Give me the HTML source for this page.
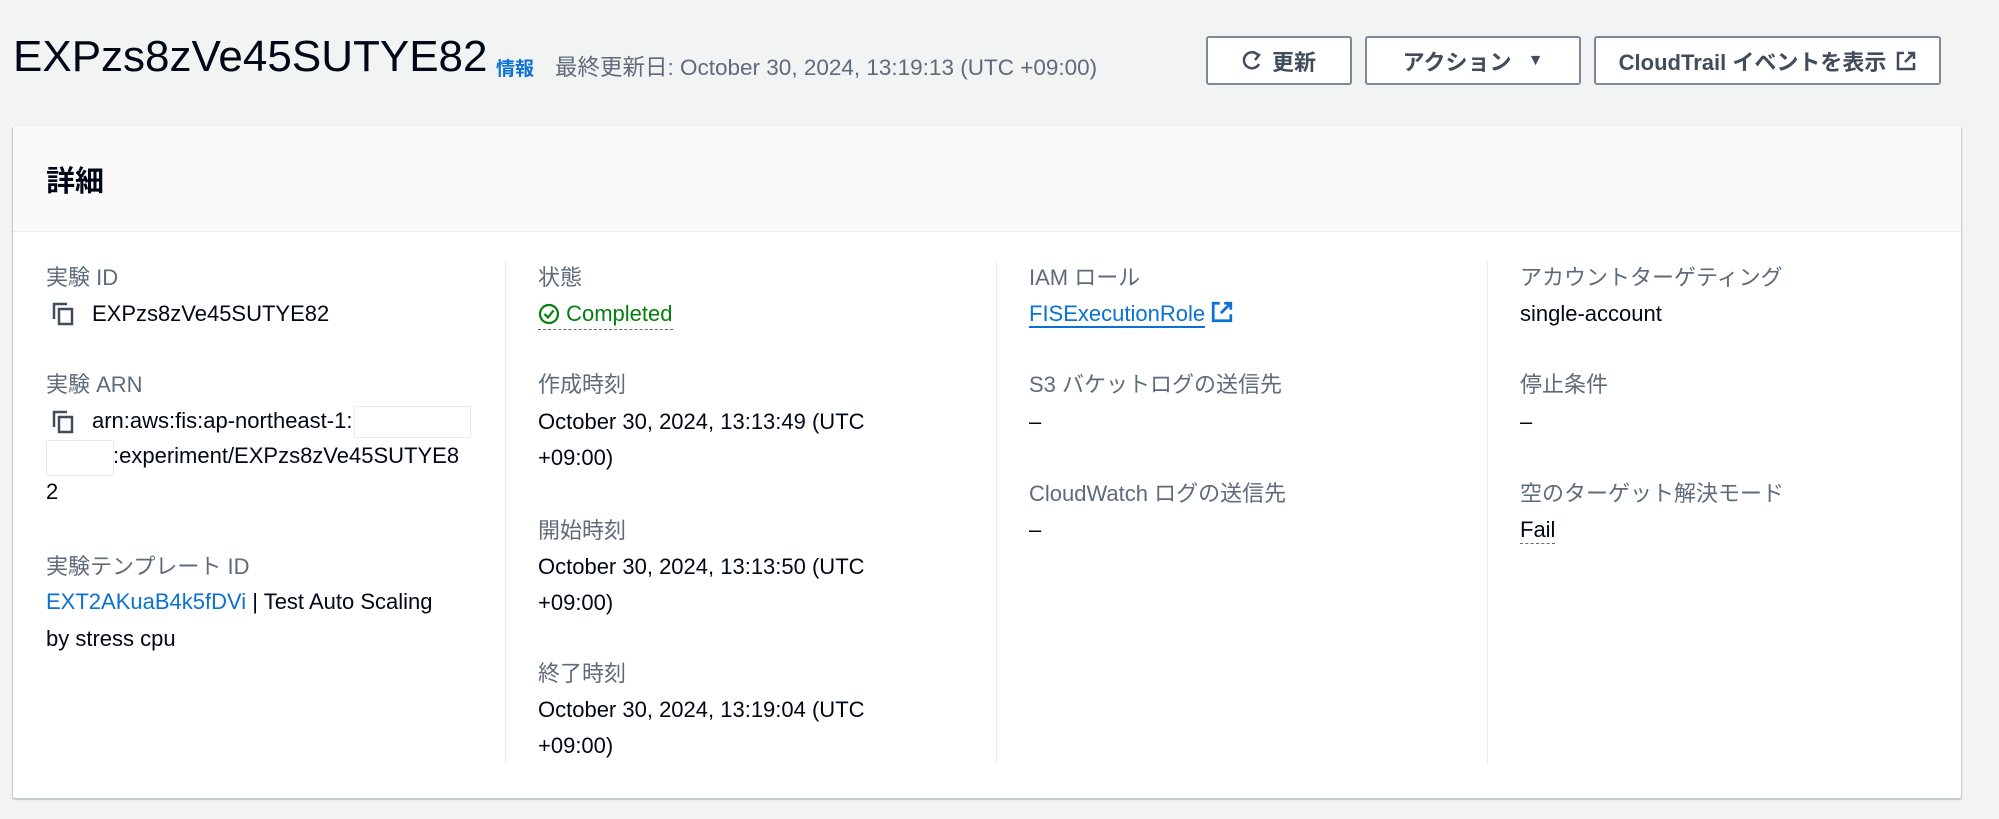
<!DOCTYPE html>
<html><head><meta charset="utf-8"><style>
body{margin:0;width:1999px;height:819px;background:#f2f3f3;font-family:"Liberation Sans","Noto Sans CJK JP",sans-serif;position:relative;overflow:hidden;color:#000716}
.a{position:absolute;white-space:nowrap}
.lbl{color:#5f6b7a;font-size:22px}
.val{font-size:22px}
.btn{position:absolute;top:36px;height:49px;border:2px solid #7d8998;border-radius:3px;background:#fff;box-sizing:border-box;font-weight:bold;font-size:22px;color:#414d5c;display:flex;align-items:center;justify-content:center;gap:10px}
.card{position:absolute;left:13px;top:126px;width:1948px;height:672px;background:#fff;box-shadow:0 1px 1px 1px rgba(0,28,36,.2);border-radius:2px}
.hdr{position:absolute;left:0;top:0;width:100%;height:105px;background:#fafafa;border-bottom:1px solid #eaeded}
.div{position:absolute;top:261px;width:1px;height:504px;background:#eaeded}
.red{position:absolute;background:#fff;border:1px solid #e9ebed}
a{color:#0972d3;text-decoration:none}
</style></head><body>
<div class="a" style="left:13px;top:32px;font-size:44px">EXPzs8zVe45SUTYE82</div>
<div class="a" style="left:496px;top:54px;font-size:19px;color:#0972d3;font-weight:bold">情報</div>
<div class="a" style="left:555px;top:50px;font-size:22.5px;color:#5f6b7a">最終更新日: October 30, 2024, 13:19:13 (UTC +09:00)</div>

<div class="btn" style="left:1206px;width:146px"><svg width="20" height="22" viewBox="0 0 20 22"><path d="M16 5 A8 8 0 1 0 17 14" fill="none" stroke="#414d5c" stroke-width="2.5"/><path d="M11 2 L17 5 L13 10" fill="none" stroke="#414d5c" stroke-width="2.5"/></svg>更新</div>
<div class="btn" style="left:1365px;width:216px">アクション&nbsp; <span style="font-size:16px">▼</span></div>
<div class="btn" style="left:1594px;width:347px">CloudTrail イベントを表示 <svg width="20" height="20" viewBox="0 0 20 20"><path d="M8 2H2V18H18V12" fill="none" stroke="#414d5c" stroke-width="2.5"/><path d="M12 2H18V8M18 2L9 11" fill="none" stroke="#414d5c" stroke-width="2.5"/></svg></div>

<div class="card"><div class="hdr"></div></div>
<div class="a" style="left:46px;top:158px;font-size:29px;font-weight:bold">詳細</div>
<div class="div" style="left:505px"></div><div class="div" style="left:996px"></div><div class="div" style="left:1487px"></div>

<!-- col1 -->
<div class="a lbl" style="left:46px;top:260px">実験 ID</div>
<svg class="a" style="left:52px;top:302px" width="24" height="24" viewBox="0 0 24 24"><path d="M2 17V2H15" fill="none" stroke="#414d5c" stroke-width="2.5"/><rect x="7" y="7" width="13" height="15" fill="none" stroke="#414d5c" stroke-width="2.5"/></svg>
<div class="a val" style="left:92px;top:301px">EXPzs8zVe45SUTYE82</div>
<div class="a lbl" style="left:46px;top:367px">実験 ARN</div>
<svg class="a" style="left:52px;top:410px" width="24" height="24" viewBox="0 0 24 24"><path d="M2 17V2H15" fill="none" stroke="#414d5c" stroke-width="2.5"/><rect x="7" y="7" width="13" height="15" fill="none" stroke="#414d5c" stroke-width="2.5"/></svg>
<div class="a val" style="left:92px;top:408px">arn:aws:fis:ap-northeast-1:</div>
<div class="red" style="left:354px;top:406px;width:115px;height:30px"></div>
<div class="red" style="left:46px;top:440px;width:66px;height:34px"></div>
<div class="a val" style="left:113px;top:443px">:experiment/EXPzs8zVe45SUTYE8</div>
<div class="a val" style="left:46px;top:479px">2</div>
<div class="a lbl" style="left:46px;top:549px">実験テンプレート ID</div>
<div class="a val" style="left:46px;top:589px"><a>EXT2AKuaB4k5fDVi</a> | Test Auto Scaling</div>
<div class="a val" style="left:46px;top:626px">by stress cpu</div>

<!-- col2 -->
<div class="a lbl" style="left:538px;top:260px">状態</div>
<div class="a val" style="left:538px;top:301px;color:#037f0c;border-bottom:1px dashed #5f6b7a;padding-bottom:2px"><svg width="22" height="22" viewBox="0 0 22 22" style="vertical-align:-4px"><circle cx="11" cy="11" r="9" fill="none" stroke="#037f0c" stroke-width="2.2"/><path d="M6.5 11L10 14.5L15.5 7.5" fill="none" stroke="#037f0c" stroke-width="2.2"/></svg> Completed</div>
<div class="a lbl" style="left:538px;top:367px">作成時刻</div>
<div class="a val" style="left:538px;top:409px">October 30, 2024, 13:13:49 (UTC</div>
<div class="a val" style="left:538px;top:445px">+09:00)</div>
<div class="a lbl" style="left:538px;top:513px">開始時刻</div>
<div class="a val" style="left:538px;top:554px">October 30, 2024, 13:13:50 (UTC</div>
<div class="a val" style="left:538px;top:590px">+09:00)</div>
<div class="a lbl" style="left:538px;top:656px">終了時刻</div>
<div class="a val" style="left:538px;top:697px">October 30, 2024, 13:19:04 (UTC</div>
<div class="a val" style="left:538px;top:733px">+09:00)</div>

<!-- col3 -->
<div class="a lbl" style="left:1029px;top:260px">IAM ロール</div>
<div class="a val" style="left:1029px;top:301px"><a style="border-bottom:2px solid #0972d3">FISExecutionRole</a> <svg width="22" height="22" viewBox="0 0 20 20" style="vertical-align:-2px"><path d="M8 2H2V18H18V12" fill="none" stroke="#0972d3" stroke-width="2.5"/><path d="M12 2H18V8M18 2L9 11" fill="none" stroke="#0972d3" stroke-width="2.5"/></svg></div>
<div class="a lbl" style="left:1029px;top:367px">S3 バケットログの送信先</div>
<div class="a val" style="left:1029px;top:409px">–</div>
<div class="a lbl" style="left:1029px;top:476px">CloudWatch ログの送信先</div>
<div class="a val" style="left:1029px;top:517px">–</div>

<!-- col4 -->
<div class="a lbl" style="left:1520px;top:260px">アカウントターゲティング</div>
<div class="a val" style="left:1520px;top:301px">single-account</div>
<div class="a lbl" style="left:1520px;top:367px">停止条件</div>
<div class="a val" style="left:1520px;top:409px">–</div>
<div class="a lbl" style="left:1520px;top:476px">空のターゲット解決モード</div>
<div class="a val" style="left:1520px;top:517px;border-bottom:1px dashed #5f6b7a">Fail</div>
</body></html>
